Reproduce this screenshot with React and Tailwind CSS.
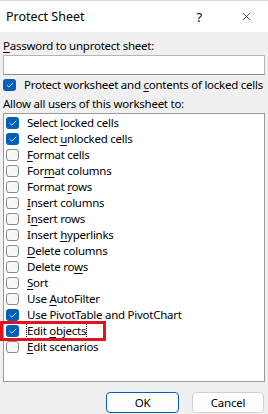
import { X } from 'lucide-react';

const items = [
  { pre: 'Select ', key: 'l', post: 'ocked cells', checked: true },
  { pre: 'Select ', key: 'u', post: 'nlocked cells', checked: true },
  { pre: '', key: 'F', post: 'ormat cells' },
  { pre: 'For', key: 'm', post: 'at columns' },
  { pre: 'Format ', key: 'r', post: 'ows' },
  { pre: '', key: 'I', post: 'nsert columns' },
  { pre: 'I', key: 'n', post: 'sert rows' },
  { pre: 'Insert ', key: 'h', post: 'yperlinks' },
  { pre: '', key: 'D', post: 'elete columns' },
  { pre: 'Delete ro', key: 'w', post: 's' },
  { pre: '', key: 'S', post: 'ort' },
  { pre: 'Use ', key: 'A', post: 'utoFilter' },
  { pre: 'Use Pi', key: 'v', post: 'otTable and PivotChart', checked: true },
  { pre: 'Edit ', key: 'o', post: 'bjects', checked: true, focus: true },
  { pre: '', key: 'E', post: 'dit scenarios' },
];

function Box({ checked }) {
  if (checked) {
    return (
      <span className="w-[13px] h-[12px] rounded-[3px] bg-[#005fb8] flex items-center justify-center shrink-0">
        <svg width="8" height="6" viewBox="0 0 8 6" fill="none">
          <path d="M0.8 3.2 L2.9 5.1 L7.2 0.9" stroke="#cfe2f5" strokeWidth="1" />
        </svg>
      </span>
    );
  }
  return <span className="w-[13px] h-[12px] rounded-[3px] border border-[#8a8a8a] bg-[#f7f7f7] shrink-0" />;
}

function Label({ pre, k, post }) {
  return (
    <span className="whitespace-nowrap">
      {pre}
      <span className="underline underline-offset-[2px]">{k}</span>
      {post}
    </span>
  );
}

export default function App() {
  return (
    <div
      className="relative w-[268px] h-[414px] bg-[#f0f0f0] overflow-hidden text-[11.5px] tracking-[-0.25px] leading-[16px] text-black"
      style={{ fontFamily: '"Noto Sans", sans-serif' }}
    >
      {/* title bar */}
      <div className="h-[32px] bg-white border-t border-[#d8d8d8] flex items-center pl-[6px]">
        <span className="text-[12.5px] tracking-normal">Protect Sheet</span>
        <span className="ml-auto mr-[38px] text-[13px]">?</span>
        <X size={13} strokeWidth={1.2} className="mr-[15px]" />
      </div>

      <div className="px-[3px]">
        <div className="mt-[6px]">
          <Label pre="" k="P" post="assword to unprotect sheet:" />
        </div>
        <div className="mt-[1px] h-[20px] bg-white border border-[#b4b4b4] border-b-[#8a8a8a]" />

        <div className="mt-[2px] flex items-center gap-[8px]">
          <Box checked />
          <Label pre="Protect worksheet and " k="c" post="ontents of locked cells" />
        </div>

        <div className="mt-[3px]">Allow all users of this worksheet to:</div>

        <div className="mt-[1px] h-[269px] bg-white border border-[#9a9a9a] pt-[1px]">
          {items.map((it, i) => (
            <div key={i} className="h-[16px] flex items-center pl-[2px] gap-[8px]">
              <Box checked={it.checked} />
              <span className={it.focus ? 'outline outline-1 outline-dotted outline-black -outline-offset-1 px-[1px] -ml-[1px]' : ''}>
                <Label pre={it.pre} k={it.key} post={it.post} />
              </span>
            </div>
          ))}
        </div>

        <div className="mt-[10px] flex justify-end gap-[13px] pr-[1px]">
          <button className="w-[73px] h-[21px] rounded-[4px] bg-[#fdfdfd] border border-[#005fb8] flex items-center justify-center">
            OK
          </button>
          <button className="w-[72px] h-[21px] rounded-[4px] bg-[#fdfdfd] border border-[#d0d0d0] flex items-center justify-center">
            Cancel
          </button>
        </div>
      </div>

      {/* red highlight annotation */}
      <div className="absolute left-0 top-[321px] w-[106px] h-[20px] border-[3px] border-[#e1141e]" />
    </div>
  );
}
